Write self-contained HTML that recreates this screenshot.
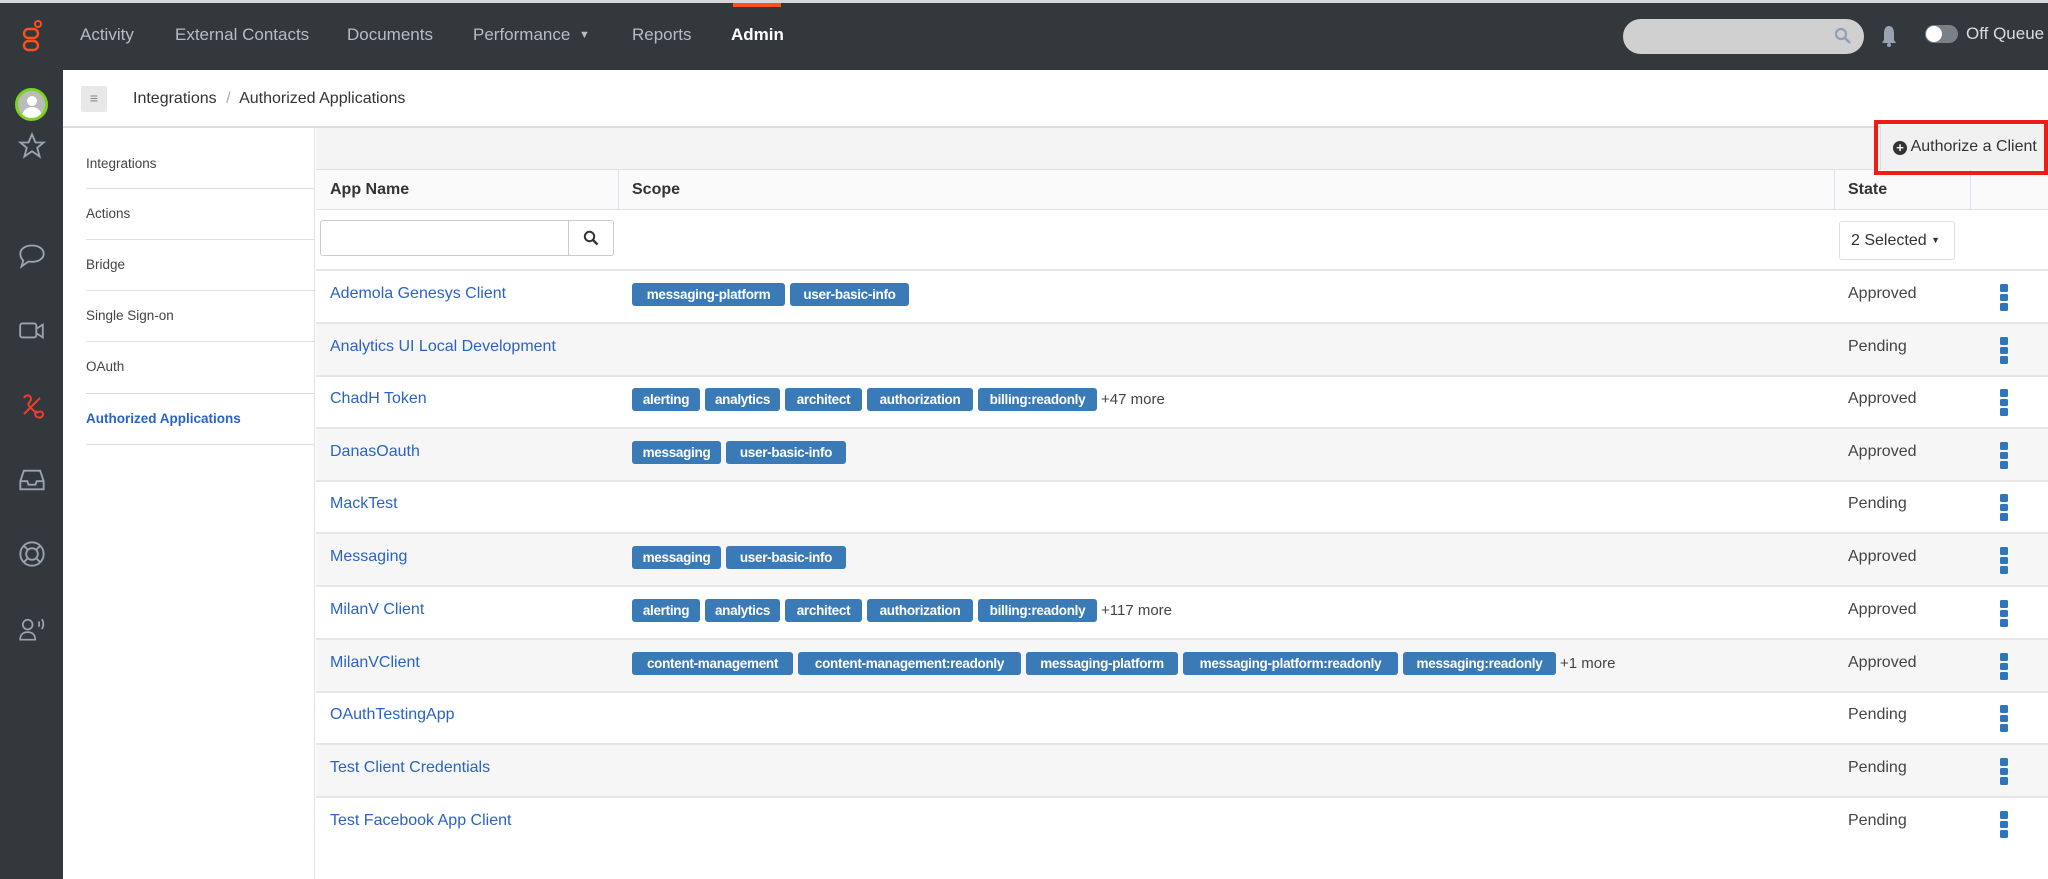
<!DOCTYPE html>
<html><head><meta charset="utf-8"><style>
*{box-sizing:border-box;margin:0;padding:0}
body{width:2048px;height:879px;overflow:hidden;background:#fff;font-family:"Liberation Sans",Arial,sans-serif;position:relative;color:#333}
.a{position:absolute}
.top{left:0;top:0;width:2048px;height:3px;background:#d8d8d8}
.hdr{left:0;top:3px;width:2048px;height:67px;background:#33383d}
.nav{top:25px;font-size:17px;color:#b5bcc4;white-space:nowrap}
.side{left:0;top:70px;width:63px;height:809px;background:#33383d}
.bc{left:63px;top:70px;width:1985px;height:58px;background:#fff;border-bottom:2px solid #ddd}
.lnav{left:63px;top:128px;width:252px;height:751px;background:#fff;border-right:1px solid #e2e2e2}
.li{position:absolute;left:23px;width:229px;font-size:13.5px;color:#444;height:51px;border-bottom:1px solid #ddd;padding-top:17px}
.tb{left:316px;top:128px;width:1732px;height:42px;background:#f4f4f4;border-bottom:1px solid #e0e0e0}
.th{left:316px;top:170px;width:1732px;height:40px;background:#fafafa;border-bottom:1px solid #dde3ea;font-weight:bold;font-size:16px;color:#333}
.fr{left:316px;top:210px;width:1732px;height:61px;background:#fff;border-bottom:2px solid #e6e6e6}
.row{position:absolute;left:316px;width:1732px;height:53px;border-bottom:2px solid #e6e6e6}
.row.g{background:#f6f6f6}
.nm{position:absolute;left:14px;top:14px;font-size:16px;color:#2a63c6}
.st{position:absolute;left:1532px;top:14px;font-size:16px;color:#444}
.tags{position:absolute;left:316px;top:12px;display:flex;align-items:center;white-space:nowrap}
.t{display:inline-block;height:23px;line-height:23px;background:#3a7bb7;color:#fff;font-weight:bold;font-size:13.5px;border-radius:3px;margin-right:5px;text-align:center;letter-spacing:-0.3px}
.more{font-size:15px;color:#444;margin-left:-1px}
.keb{position:absolute;left:1684px;top:13px;width:8px}
.keb i{display:block;width:8px;height:7.5px;background:#2f75bb;border-radius:1.5px;margin-bottom:2px}
</style></head><body>
<div class="a top"></div>
<div class="a hdr"></div>
<div class="a" style="left:733px;top:3px;width:48px;height:4px;background:#ff4f1f"></div>
<svg class="a" style="left:22px;top:20px" width="22" height="34" viewBox="0 0 22 34"><circle cx="16" cy="4" r="3" fill="none" stroke="#ff4f1f" stroke-width="2"/><rect x="2" y="9" width="14" height="9" rx="4.5" fill="none" stroke="#ff4f1f" stroke-width="2.4"/><rect x="2" y="21" width="14" height="9" rx="4.5" fill="none" stroke="#ff4f1f" stroke-width="2.4"/></svg>
<div class="a nav" style="left:80px">Activity</div>
<div class="a nav" style="left:175px">External Contacts</div>
<div class="a nav" style="left:347px">Documents</div>
<div class="a nav" style="left:473px">Performance <span style="font-size:11px;vertical-align:2px;margin-left:4px">▼</span></div>
<div class="a nav" style="left:632px">Reports</div>
<div class="a nav" style="left:731px;color:#fff;font-weight:bold">Admin</div>
<div class="a" style="left:1623px;top:19px;width:241px;height:35px;border-radius:18px;background:#d0d0d0"></div>
<svg class="a" style="left:1834px;top:27px" width="18" height="18" viewBox="0 0 18 18"><circle cx="7" cy="7" r="5" fill="none" stroke="#8fa0b5" stroke-width="2.2"/><path d="M11 11l5 5" stroke="#8fa0b5" stroke-width="2.6"/></svg>
<svg class="a" style="left:1880px;top:24px" width="18" height="24" viewBox="0 0 18 24"><path d="M9 2c-4 0-5 4-5 8v6l-2 3h14l-2-3v-6c0-4-1-8-5-8z" fill="#9aa4b0"/><circle cx="9" cy="21" r="2" fill="#9aa4b0"/></svg>
<div class="a" style="left:1925px;top:25px;width:33px;height:18px;border-radius:9px;background:#7a8088"></div>
<div class="a" style="left:1926px;top:26px;width:16px;height:16px;border-radius:8px;background:#fff"></div>
<div class="a nav" style="left:1966px;top:24px;color:#d8dde2;font-size:17px">Off Queue</div>

<div class="a side"></div>
<div class="a" style="left:15px;top:88px;width:33px;height:33px;border-radius:50%;border:3px solid #7ed321;background:#bbb;overflow:hidden"><div style="position:absolute;left:9px;top:5px;width:10px;height:10px;border-radius:50%;background:#fff"></div><div style="position:absolute;left:4px;top:16px;width:20px;height:14px;border-radius:10px 10px 0 0;background:#fff"></div></div>
<svg class="a" style="left:18px;top:132px" width="28" height="28" viewBox="0 0 24 24" fill="none" stroke="#9aa4b0" stroke-width="1.6"><path d="M12 2l3 7h7l-5.5 4.5 2 7.5-6.5-4.5-6.5 4.5 2-7.5L2 9h7z"/></svg>
<svg class="a" style="left:18px;top:243px" width="28" height="26" viewBox="0 0 24 22" fill="none" stroke="#9aa4b0" stroke-width="1.6"><path d="M12 2c6 0 10 3 10 7s-4 7-10 7c-1 0-2 0-3-.3L3 20l1.5-5C3 13.5 2 11.5 2 9c0-4 4-7 10-7z"/></svg>
<svg class="a" style="left:18px;top:320px" width="28" height="22" viewBox="0 0 26 20" fill="none" stroke="#9aa4b0" stroke-width="1.7"><rect x="2" y="3" width="15" height="13" rx="2"/><path d="M17 8l6-4v12l-6-4"/></svg>
<svg class="a" style="left:20px;top:392px" width="24" height="28" viewBox="0 0 24 28" fill="none" stroke="#f03c2e" stroke-width="2"><path d="M4 6c2-4 7-3 7 1 0 3-4 4-2 7l6 6c3 2 4-2 7 0 3 3-1 7-5 5-2-1-3-4 0-6M4 22L20 6"/></svg>
<svg class="a" style="left:18px;top:467px" width="28" height="26" viewBox="0 0 24 22" fill="none" stroke="#9aa4b0" stroke-width="1.6"><path d="M2 12l3-9h14l3 9v7H2zM2 12h6l1 3h6l1-3h6"/></svg>
<svg class="a" style="left:18px;top:540px" width="28" height="28" viewBox="0 0 24 24" fill="none" stroke="#9aa4b0" stroke-width="1.6"><circle cx="12" cy="12" r="10"/><circle cx="12" cy="12" r="5"/><path d="M8 8L5 5M16 8l3-3M8 16l-3 3M16 16l3 3"/></svg>
<svg class="a" style="left:18px;top:617px" width="28" height="26" viewBox="0 0 26 24" fill="none" stroke="#9aa4b0" stroke-width="1.6"><circle cx="9" cy="7" r="4.5"/><path d="M2 21c0-5 3-7 7-7s7 2 7 7z"/><path d="M19 4c1 1 1 4 0 5M22 2c2 2 2 7 0 9"/></svg>

<div class="a bc"></div>
<div class="a" style="left:81px;top:86px;width:26px;height:26px;background:#e8e8e8;border-radius:2px;color:#888;font-size:14px;text-align:center;line-height:25px">≡</div>
<div class="a" style="left:133px;top:90px;font-size:16px;color:#333">Integrations <span style="color:#aaa;margin:0 5px">/</span> Authorized Applications</div>

<div class="a lnav">
<div class="li" style="top:0;padding-top:28px;height:61px">Integrations</div>
<div class="li" style="top:61px;height:51px">Actions</div>
<div class="li" style="top:112px">Bridge</div>
<div class="li" style="top:163px">Single Sign-on</div>
<div class="li" style="top:214px;height:52px">OAuth</div>
<div class="li" style="top:266px;color:#2a63c6;font-weight:bold">Authorized Applications</div>
</div>

<div class="a tb"></div>

<div class="a th">
<div class="a" style="left:14px;top:11px">App Name</div>
<div class="a" style="left:302px;top:0;width:1px;height:40px;background:#dde3ea"></div>
<div class="a" style="left:316px;top:11px">Scope</div>
<div class="a" style="left:1518px;top:0;width:1px;height:40px;background:#dde3ea"></div>
<div class="a" style="left:1532px;top:11px">State</div>
<div class="a" style="left:1654px;top:0;width:1px;height:40px;background:#dde3ea"></div>
</div>
<div class="a" style="left:1880px;top:125px;width:168px;height:45px;background:#f1f1f1;border-left:1px solid #ddd;font-size:16px;color:#333;padding:13px 0 0 12px;white-space:nowrap;z-index:5"><span style="display:inline-block;width:14px;height:14px;border-radius:50%;background:#333;color:#fff;font-size:13px;line-height:14px;text-align:center;font-weight:bold;vertical-align:-1px">+</span> Authorize a Client</div>
<div class="a" style="left:1874px;top:120px;width:174px;height:55px;border:4px solid #ee1c14;z-index:6"></div>
<div class="a fr">
<div class="a" style="left:4px;top:10px;width:249px;height:36px;border:1px solid #ccc;border-radius:3px 0 0 3px"></div>
<div class="a" style="left:252px;top:10px;width:46px;height:36px;border:1px solid #ccc;border-radius:0 3px 3px 0;background:#fff"></div>
<svg class="a" style="left:267px;top:20px" width="16" height="16" viewBox="0 0 16 16"><circle cx="6.5" cy="6.5" r="4.7" fill="none" stroke="#333" stroke-width="2"/><path d="M10 10l4.5 4.5" stroke="#333" stroke-width="2.4"/></svg>
<div class="a" style="left:1523px;top:11px;width:116px;height:39px;border:1px solid #ddd;border-radius:3px;font-size:16px;color:#333;padding:10px 0 0 11px">2 Selected <span style="font-size:9px;vertical-align:2px">▼</span></div>
</div>

<div class="row" style="top:271px"><div class="nm">Ademola Genesys Client</div><div class="tags"><span class="t" style="width:153px">messaging-platform</span><span class="t" style="width:119px">user-basic-info</span></div><div class="st">Approved</div><div class="keb"><i></i><i></i><i></i></div></div>
<div class="row g" style="top:324px"><div class="nm">Analytics UI Local Development</div><div class="st">Pending</div><div class="keb"><i></i><i></i><i></i></div></div>
<div class="row" style="top:376px"><div class="nm">ChadH Token</div><div class="tags"><span class="t" style="width:68px">alerting</span><span class="t" style="width:75px">analytics</span><span class="t" style="width:77px">architect</span><span class="t" style="width:106px">authorization</span><span class="t" style="width:119px">billing:readonly</span><span class="more">+47 more</span></div><div class="st">Approved</div><div class="keb"><i></i><i></i><i></i></div></div>
<div class="row g" style="top:429px"><div class="nm">DanasOauth</div><div class="tags"><span class="t" style="width:89px">messaging</span><span class="t" style="width:120px">user-basic-info</span></div><div class="st">Approved</div><div class="keb"><i></i><i></i><i></i></div></div>
<div class="row" style="top:481px"><div class="nm">MackTest</div><div class="st">Pending</div><div class="keb"><i></i><i></i><i></i></div></div>
<div class="row g" style="top:534px"><div class="nm">Messaging</div><div class="tags"><span class="t" style="width:89px">messaging</span><span class="t" style="width:120px">user-basic-info</span></div><div class="st">Approved</div><div class="keb"><i></i><i></i><i></i></div></div>
<div class="row" style="top:587px"><div class="nm">MilanV Client</div><div class="tags"><span class="t" style="width:68px">alerting</span><span class="t" style="width:75px">analytics</span><span class="t" style="width:77px">architect</span><span class="t" style="width:106px">authorization</span><span class="t" style="width:119px">billing:readonly</span><span class="more">+117 more</span></div><div class="st">Approved</div><div class="keb"><i></i><i></i><i></i></div></div>
<div class="row g" style="top:640px"><div class="nm">MilanVClient</div><div class="tags"><span class="t" style="width:161px">content-management</span><span class="t" style="width:223px">content-management:readonly</span><span class="t" style="width:152px">messaging-platform</span><span class="t" style="width:215px">messaging-platform:readonly</span><span class="t" style="width:153px">messaging:readonly</span><span class="more">+1 more</span></div><div class="st">Approved</div><div class="keb"><i></i><i></i><i></i></div></div>
<div class="row" style="top:692px"><div class="nm">OAuthTestingApp</div><div class="st">Pending</div><div class="keb"><i></i><i></i><i></i></div></div>
<div class="row g" style="top:745px"><div class="nm">Test Client Credentials</div><div class="st">Pending</div><div class="keb"><i></i><i></i><i></i></div></div>
<div class="row" style="top:798px;border-bottom:none"><div class="nm">Test Facebook App Client</div><div class="st">Pending</div><div class="keb"><i></i><i></i><i></i></div></div>
</body></html>
